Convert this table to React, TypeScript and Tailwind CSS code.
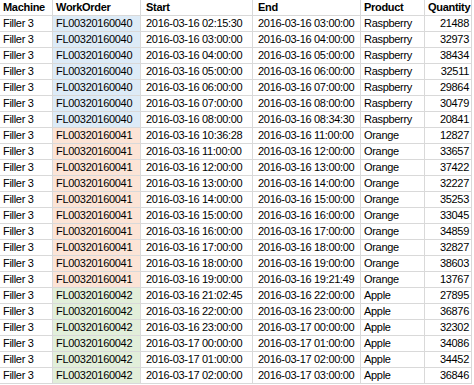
import React from "react";

type Row = [string, string, string, string, number, "b" | "o" | "g"];

const rows: Row[] = [
  ["FL00320160040", "2016-03-16 02:15:30", "2016-03-16 03:00:00", "Raspberry", 21488, "b"],
  ["FL00320160040", "2016-03-16 03:00:00", "2016-03-16 04:00:00", "Raspberry", 32973, "b"],
  ["FL00320160040", "2016-03-16 04:00:00", "2016-03-16 05:00:00", "Raspberry", 38434, "b"],
  ["FL00320160040", "2016-03-16 05:00:00", "2016-03-16 06:00:00", "Raspberry", 32511, "b"],
  ["FL00320160040", "2016-03-16 06:00:00", "2016-03-16 07:00:00", "Raspberry", 29864, "b"],
  ["FL00320160040", "2016-03-16 07:00:00", "2016-03-16 08:00:00", "Raspberry", 30479, "b"],
  ["FL00320160040", "2016-03-16 08:00:00", "2016-03-16 08:34:30", "Raspberry", 20841, "b"],
  ["FL00320160041", "2016-03-16 10:36:28", "2016-03-16 11:00:00", "Orange", 12827, "o"],
  ["FL00320160041", "2016-03-16 11:00:00", "2016-03-16 12:00:00", "Orange", 33657, "o"],
  ["FL00320160041", "2016-03-16 12:00:00", "2016-03-16 13:00:00", "Orange", 37422, "o"],
  ["FL00320160041", "2016-03-16 13:00:00", "2016-03-16 14:00:00", "Orange", 32227, "o"],
  ["FL00320160041", "2016-03-16 14:00:00", "2016-03-16 15:00:00", "Orange", 35253, "o"],
  ["FL00320160041", "2016-03-16 15:00:00", "2016-03-16 16:00:00", "Orange", 33045, "o"],
  ["FL00320160041", "2016-03-16 16:00:00", "2016-03-16 17:00:00", "Orange", 34859, "o"],
  ["FL00320160041", "2016-03-16 17:00:00", "2016-03-16 18:00:00", "Orange", 32827, "o"],
  ["FL00320160041", "2016-03-16 18:00:00", "2016-03-16 19:00:00", "Orange", 38603, "o"],
  ["FL00320160041", "2016-03-16 19:00:00", "2016-03-16 19:21:49", "Orange", 13767, "o"],
  ["FL00320160042", "2016-03-16 21:02:45", "2016-03-16 22:00:00", "Apple", 27895, "g"],
  ["FL00320160042", "2016-03-16 22:00:00", "2016-03-16 23:00:00", "Apple", 36876, "g"],
  ["FL00320160042", "2016-03-16 23:00:00", "2016-03-17 00:00:00", "Apple", 32302, "g"],
  ["FL00320160042", "2016-03-17 00:00:00", "2016-03-17 01:00:00", "Apple", 34086, "g"],
  ["FL00320160042", "2016-03-17 01:00:00", "2016-03-17 02:00:00", "Apple", 34452, "g"],
  ["FL00320160042", "2016-03-17 02:00:00", "2016-03-17 03:00:00", "Apple", 36846, "g"],
];

const fill: Record<string, string> = {
  b: "bg-[#ddebf7]",
  o: "bg-[#fce4d6]",
  g: "bg-[#e2efda]",
};

const cols = "grid grid-cols-[53px_88px_112px_108px_64px_47px]";
const base =
  "h-[16px] border-r border-b border-[#d9d9d9] pr-[2px] leading-[15px] whitespace-nowrap overflow-hidden";
const pads = ["pl-[3px]", "pl-[3px]", "pl-[5px]", "pl-[5px]", "pl-[3px]", "pl-[3px]"];

export default function App() {
  return (
    <div className="w-[474px] h-[385px] bg-white overflow-hidden text-[11px] tracking-[-0.3px] text-black font-['Liberation_Sans',Arial,sans-serif]">
      <div className={cols}>
        {["Machine", "WorkOrder", "Start", "End", "Product", "Quantity"].map((h, j) => (
          <div key={h} className={`${base} ${pads[j]} font-bold`}>
            {h}
          </div>
        ))}
        {rows.map((r, i) => (
          <React.Fragment key={i}>
            <div className={`${base} ${pads[0]}`}>Filler 3</div>
            <div className={`${base} ${pads[1]} ${fill[r[5]]}`}>{r[0]}</div>
            <div className={`${base} ${pads[2]}`}>{r[1]}</div>
            <div className={`${base} ${pads[3]}`}>{r[2]}</div>
            <div className={`${base} ${pads[4]}`}>{r[3]}</div>
            <div className={`${base} ${pads[5]} text-right`}>{r[4]}</div>
          </React.Fragment>
        ))}
      </div>
    </div>
  );
}
